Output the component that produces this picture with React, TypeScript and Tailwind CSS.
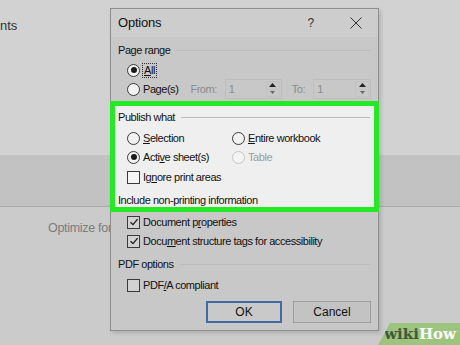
import React from "react";

const font = { fontFamily: '"Liberation Sans", Arial, sans-serif' };

// Radio button in the Office style
const Radio = ({ checked, disabled }: { checked?: boolean; disabled?: boolean }) => (
  <span
    className={`flex h-[13px] w-[13px] shrink-0 items-center justify-center rounded-full border ${
      disabled ? "border-[#c6c6c6] bg-[#f4f4f4]" : "border-[#3a3a3a] bg-[#f2f2f2]"
    }`}
  >
    {checked && <span className="h-[6px] w-[6px] rounded-full bg-[#1a1a1a]" />}
  </span>
);

const Check = ({ checked }: { checked?: boolean }) => (
  <span className="flex h-[13px] w-[13px] shrink-0 items-center justify-center border border-[#3a3a3a] bg-[#d2d2d2]">
    {checked && (
      <svg width="10" height="10" viewBox="0 0 10 10">
        <path d="M1.5 5.2 L4 7.6 L8.6 2.2" fill="none" stroke="#1a1a1a" strokeWidth="1.3" />
      </svg>
    )}
  </span>
);

const Spinner = () => (
  <span className="ml-auto mr-[1px] flex h-[16px] w-[14px] flex-col border border-[#c2c2c2]">
    <span className="flex flex-1 items-center justify-center border-b border-[#c2c2c2]">
      <svg width="7" height="4" viewBox="0 0 7 4">
        <path d="M0 4 L3.5 0 L7 4 Z" fill="#222" />
      </svg>
    </span>
    <span className="flex flex-1 items-center justify-center">
      <svg width="5" height="3" viewBox="0 0 5 3">
        <path d="M0 0 L2.5 3 L5 0 Z" fill="#666" />
      </svg>
    </span>
  </span>
);

const Group = ({ title }: { title: string }) => (
  <div className="flex items-center gap-[6px]">
    <span className="whitespace-nowrap">{title}</span>
    <span className="h-px flex-1 bg-[#bcbcbc]" />
  </div>
);

export default function App() {
  return (
    <div
      className="relative h-[345px] w-[460px] overflow-hidden bg-[#d2d2d2] text-[11px] leading-[14px] tracking-[-0.45px] text-[#111]"
      style={font}
    >
      {/* Background window */}
      <div className="flex h-full flex-col">
        <div className="h-[155px] pt-[18px] text-[13px] leading-[16px] tracking-normal text-[#333]">nts</div>
        <div className="h-[52px] border-b border-[#a9a9a9] bg-[#c2c2c2]" />
        <div className="flex-1 bg-[#cbcbcb] pl-[48px] pt-[13px] text-[12.5px] leading-[16px] tracking-[-0.3px] text-[#7c7c7c]">
          Optimize for
        </div>
      </div>

      {/* Options dialog */}
      <div className="absolute left-[110px] top-[8px] flex h-[323px] w-[269px] flex-col border border-[#8e8e8e] bg-[#c8c8c8] shadow-[2px_2px_4px_rgba(0,0,0,0.15)]">
        <div className="flex h-[28px] shrink-0 items-center bg-[#cdcdcd] pl-[7px] pr-[16px] text-[13px] tracking-[-0.2px]">
          <span>Options</span>
          <span className="ml-auto mr-[36px] text-[12px] text-[#333]">?</span>
          <svg width="12" height="12" viewBox="0 0 12 12">
            <path d="M0.5 0.5 L11.5 11.5 M11.5 0.5 L0.5 11.5" stroke="#333" strokeWidth="1" />
          </svg>
        </div>

        <div className="flex flex-col px-[7px] pt-[6px]">
          <Group title="Page range" />
          <div className="mt-[6px] flex h-[14px] items-center gap-[2px] pl-[9px]">
            <Radio checked />
            <span className="border border-dotted border-[#333] px-[1px] leading-[13px]">
              <u>A</u>ll
            </span>
          </div>
          <div className="mt-[2px] flex h-[20px] items-center pl-[9px]">
            <Radio />
            <span className="ml-[3px]">Page(s)</span>
            <span className="ml-[12px] text-[#8a8a8a]">From:</span>
            <span className="ml-[8px] flex h-[20px] w-[60px] items-center border border-[#bdbdbd] pl-[3px] text-[#8a8a8a]">
              1
              <Spinner />
            </span>
            <span className="ml-[10px] text-[#8a8a8a]">To:</span>
            <span className="ml-[8px] flex h-[20px] w-[61px] items-center border border-[#bdbdbd] pl-[3px] text-[#8a8a8a]">
              1
              <Spinner />
            </span>
          </div>
        </div>

        {/* Highlighted section */}
        <div className="-mx-[1px] mt-[2px] flex h-[111px] shrink-0 flex-col border-[5px] border-[#27e827] bg-[#efefef] pl-[3px] pr-[4px] pt-[4px]">
          <Group title="Publish what" />
          <div className="mt-[7px] grid grid-cols-[105px_1fr] gap-y-[5px] pl-[9px]">
            <div className="flex h-[14px] items-center gap-[3px]">
              <Radio />
              <span>
                <u>S</u>election
              </span>
            </div>
            <div className="flex h-[14px] items-center gap-[3px]">
              <Radio />
              <span>
                <u>E</u>ntire workbook
              </span>
            </div>
            <div className="flex h-[14px] items-center gap-[3px]">
              <Radio checked />
              <span>
                Acti<u>v</u>e sheet(s)
              </span>
            </div>
            <div className="flex h-[14px] items-center gap-[3px] text-[#9c9c9c]">
              <Radio disabled />
              <span>Table</span>
            </div>
            <div className="col-span-2 mt-[1px] flex h-[14px] items-center gap-[3px]">
              <span className="flex h-[13px] w-[13px] border border-[#3a3a3a] bg-[#f4f4f4]" />
              <span>
                Ig<u>n</u>ore print areas
              </span>
            </div>
          </div>
          <div className="mt-[9px]">Include non-printing information</div>
        </div>

        <div className="flex flex-1 flex-col px-[7px] pt-[3px]">
          <div className="flex h-[14px] items-center gap-[3px] pl-[9px]">
            <Check checked />
            <span>
              Document p<u>r</u>operties
            </span>
          </div>
          <div className="mt-[5px] flex h-[14px] items-center gap-[3px] pl-[9px]">
            <Check checked />
            <span>
              Docu<u>m</u>ent structure tags for accessibility
            </span>
          </div>
          <div className="mt-[9px]">
            <Group title="PDF options" />
          </div>
          <div className="mt-[7px] flex h-[14px] items-center gap-[3px] pl-[9px]">
            <Check />
            <span>
              PDF<u>/</u>A compliant
            </span>
          </div>
          <div className="mt-[9px] flex justify-end gap-[11px] pr-[0px]">
            <button className="h-[22px] w-[76px] border-2 border-[#3f6aa6] bg-[#c9c9c9] text-[12px] tracking-normal">
              OK
            </button>
            <button className="h-[22px] w-[78px] border border-[#a0a0a0] bg-[#c3c3c3] text-[12px] tracking-normal">
              Cancel
            </button>
          </div>
        </div>
      </div>

      {/* wikiHow watermark */}
      <div className="absolute bottom-0 right-0 flex h-[22px] w-[82px] items-center justify-end bg-[#9cc47f] pr-[4px] [clip-path:polygon(12px_0,100%_0,100%_100%,0_100%)]">
        <span
          className="text-[15px] font-bold leading-none tracking-normal text-[#45573a]"
          style={{ fontFamily: '"DejaVu Serif", serif' }}
        >
          wiki
        </span>
        <span
          className="text-[15px] font-bold leading-none tracking-normal text-white"
          style={{ fontFamily: '"DejaVu Serif", serif' }}
        >
          How
        </span>
      </div>
    </div>
  );
}
